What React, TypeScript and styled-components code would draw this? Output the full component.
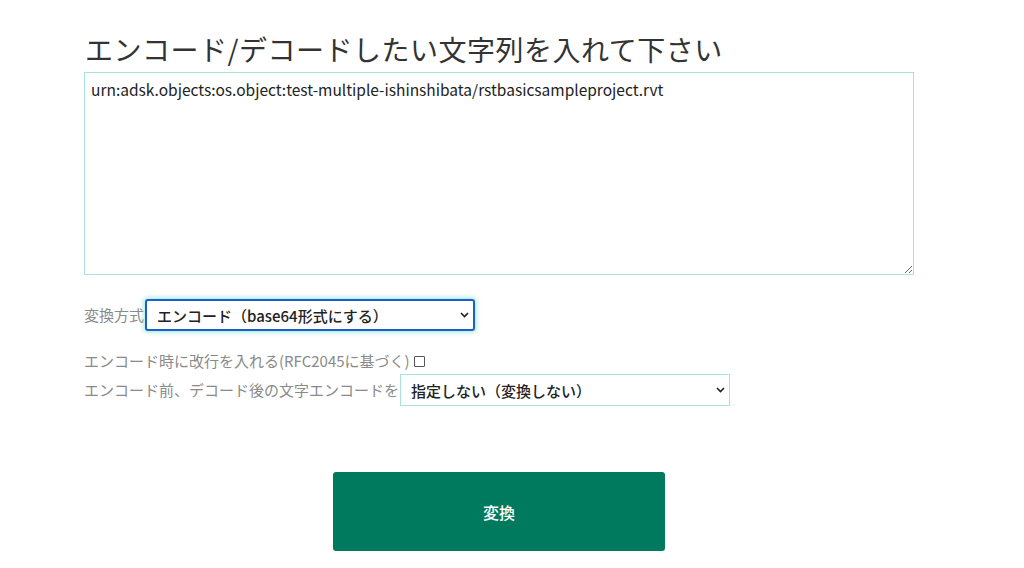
import React, { useState } from 'react';
import styled, { createGlobalStyle } from 'styled-components';

const GlobalStyle = createGlobalStyle`
  html, body {
    margin: 0;
    padding: 0;
    background: #ffffff;
  }
  body {
    font-family: "Noto Sans CJK JP", "Noto Sans", sans-serif;
    color: #333333;
  }
`;

const Page = styled.div`
  width: 830px;
  padding: 30px 0 0 84px;
`;

const Title = styled.h1`
  margin: 0 0 0 1px;
  font-size: 28px;
  font-weight: 400;
  line-height: 38px;
  color: #333333;
  letter-spacing: 0.5px;
`;

const Source = styled.textarea`
  display: block;
  box-sizing: border-box;
  width: 830px;
  height: 203px;
  margin-top: 4px;
  padding: 5px 6px;
  border: 1px solid #a9e4dc;
  border-radius: 0;
  resize: vertical;
  outline: none;
  font-family: "Noto Sans CJK JP", "Noto Sans", sans-serif;
  font-size: 15.5px;
  line-height: 22px;
  color: #222222;
`;

const Row = styled.div<{ $top: number }>`
  display: flex;
  align-items: center;
  margin-top: ${(p) => p.$top}px;
`;

const Label = styled.label`
  font-size: 15px;
  line-height: 22px;
  color: #8a8a8a;
  white-space: nowrap;
  margin-right: 1px;
`;

const Check = styled.input`
  width: 11px;
  height: 11px;
  margin: 0 0 0 3px;
  appearance: none;
  border: 1px solid #555555;
  border-radius: 1px;
  background: #fff;
`;

const Select = styled.select<{ $width: number; $focused?: boolean }>`
  box-sizing: border-box;
  width: ${(p) => p.$width}px;
  height: 32px;
  margin: 0;
  padding: 0 6px 0 ${(p) => (p.$focused ? '10px' : '10px')};
  border: ${(p) => (p.$focused ? '2px solid #1a5fd0' : '1px solid #a9e4dc')};
  border-radius: ${(p) => (p.$focused ? '3px' : '0')};
  box-shadow: ${(p) => (p.$focused ? '0 0 4px 2px rgba(120, 220, 205, 0.55)' : 'none')};
  background: #ffffff;
  outline: none;
  font-family: "Noto Sans CJK JP", "Noto Sans", sans-serif;
  font-size: 15px;
  font-weight: 500;
  color: #222222;
  appearance: none;
  background-image: url("data:image/svg+xml,%3Csvg xmlns='http://www.w3.org/2000/svg' width='9' height='6'%3E%3Cpath d='M1 1l3.5 3.5L8 1' fill='none' stroke='%23222' stroke-width='1.6'/%3E%3C/svg%3E");
  background-repeat: no-repeat;
  background-position: right 4px center;
`;

const Actions = styled.div`
  display: flex;
  justify-content: center;
  margin-top: 66px;
`;

const Convert = styled.button`
  width: 332px;
  height: 79px;
  border: none;
  border-radius: 3px;
  background: #007a5e;
  color: #ffffff;
  font-family: "Noto Sans CJK JP", "Noto Sans", sans-serif;
  font-size: 16px;
  font-weight: 500;
  cursor: pointer;
`;

export default function App() {
  const [text, setText] = useState(
    'urn:adsk.objects:os.object:test-multiple-ishinshibata/rstbasicsampleproject.rvt'
  );
  const [mode, setMode] = useState('encode');
  const [charset, setCharset] = useState('none');
  const [wrap, setWrap] = useState(false);

  return (
    <>
      <GlobalStyle />
      <Page>
        <Title>エンコード/デコードしたい文字列を入れて下さい</Title>
        <Source value={text} onChange={(e) => setText(e.target.value)} />

        <Row $top={24}>
          <Label>変換方式</Label>
          <Select $width={330} $focused value={mode} onChange={(e) => setMode(e.target.value)}>
            <option value="encode">エンコード（base64形式にする）</option>
            <option value="decode">デコード（base64形式から戻す）</option>
          </Select>
        </Row>

        <Row $top={19}>
          <Label>エンコード時に改行を入れる(RFC2045に基づく)</Label>
          <Check type="checkbox" checked={wrap} onChange={(e) => setWrap(e.target.checked)} />
        </Row>

        <Row $top={2}>
          <Label>エンコード前、デコード後の文字エンコードを</Label>
          <Select $width={330} value={charset} onChange={(e) => setCharset(e.target.value)}>
            <option value="none">指定しない（変換しない）</option>
            <option value="utf8">UTF-8</option>
            <option value="sjis">Shift_JIS</option>
            <option value="euc">EUC-JP</option>
          </Select>
        </Row>

        <Actions>
          <Convert type="button">変換</Convert>
        </Actions>
      </Page>
    </>
  );
}
